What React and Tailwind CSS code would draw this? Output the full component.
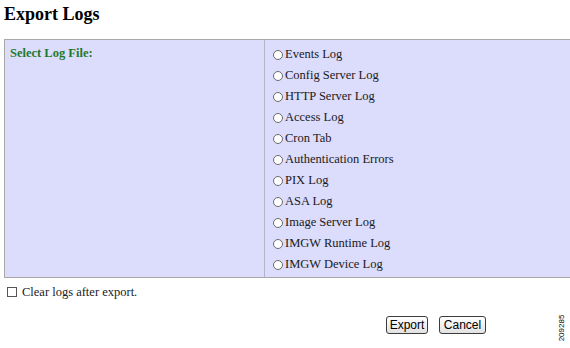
import React from "react";

const logs = [
  "Events Log",
  "Config Server Log",
  "HTTP Server Log",
  "Access Log",
  "Cron Tab",
  "Authentication Errors",
  "PIX Log",
  "ASA Log",
  "Image Server Log",
  "IMGW Runtime Log",
  "IMGW Device Log",
];

export default function App() {
  return (
    <div className="w-[570px] h-[348px] overflow-hidden bg-white font-['Liberation_Serif',serif] text-[#1a1a1a] relative">
      {/* Title */}
      <h1 className="pl-[4px] pt-[3px] text-[18px] font-bold leading-[22px] text-black">Export Logs</h1>

      {/* Log file table */}
      <div className="ml-[4px] mt-[14px] w-[600px] h-[239px] flex border border-[#a8a8a8] bg-[#dcdcfc]">
        <div className="w-[260px] border-r border-[#b4b4c8] pl-[5px] pt-[4px] leading-[16px]">
          <span className="text-[12.5px] font-bold text-[#1e7a2a]">Select Log File:</span>
        </div>
        <div className="pl-[8px] pt-[4px] flex flex-col">
          {logs.map((l) => (
            <label key={l} className="h-[21px] flex items-center text-[12.5px] leading-none">
              <span className="w-[10px] h-[10px] rounded-full border border-[#6a6a6a] bg-white mr-[2px]" />
              {l}
            </label>
          ))}
        </div>
      </div>

      {/* Clear checkbox */}
      <div className="flex items-center ml-[7px] mt-[8px] text-[12.5px] leading-none">
        <span className="w-[10px] h-[10px] border border-[#555] bg-white mr-[5px]" />
        Clear logs after export.
      </div>

      {/* Buttons */}
      <div className="flex gap-[11px] ml-[386px] mt-[17px] font-['Liberation_Sans',sans-serif] text-[12px] text-black">
        <button className="w-[42px] h-[18px] rounded-[3px] border border-[#3c3c3c] bg-gradient-to-b from-white to-[#e2e2e2] leading-none">
          Export
        </button>
        <button className="w-[47px] h-[18px] rounded-[3px] border border-[#3c3c3c] bg-gradient-to-b from-white to-[#e2e2e2] leading-none">
          Cancel
        </button>
      </div>

      {/* Figure number */}
      <div className="absolute left-[548px] top-[324px] w-[28px] text-center -rotate-90 font-['Liberation_Sans',sans-serif] text-[8px] leading-none text-black">
        209285
      </div>
    </div>
  );
}
